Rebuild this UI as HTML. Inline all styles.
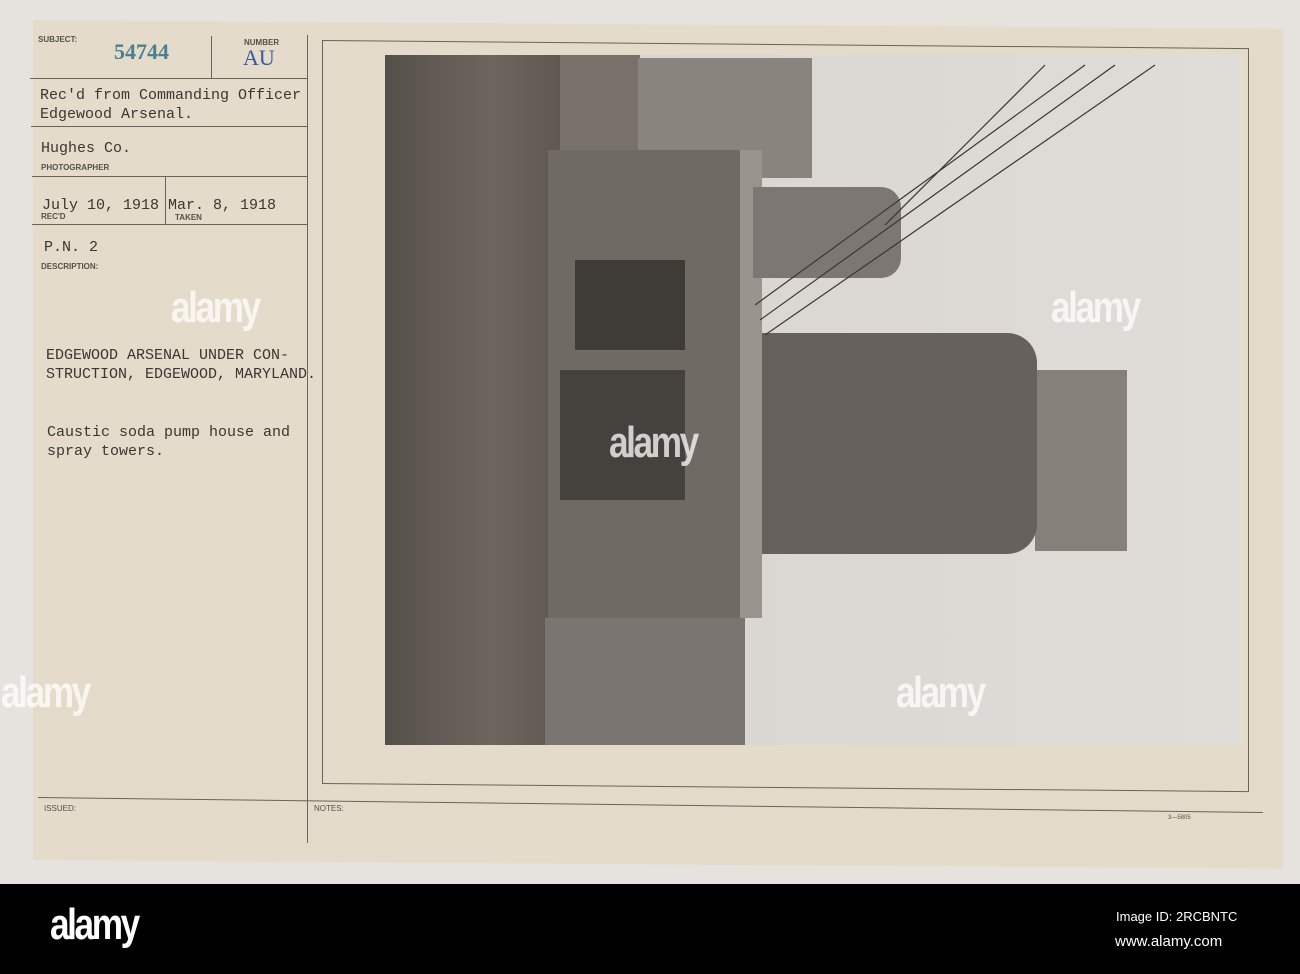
<!DOCTYPE html>
<html><head><meta charset="utf-8"><style>
body{margin:0;width:1300px;height:974px;background:#e6e2de;position:relative;overflow:hidden;font-family:"Liberation Mono",monospace;}
.a{position:absolute}
.card{left:33px;top:20px;width:1250px;height:840px;background:#e5dbca;transform:skewY(0.4deg);transform-origin:0 0}
.t{position:absolute;font-size:15px;color:#3a3632;white-space:pre;line-height:19px}
.s{position:absolute;font-family:"Liberation Sans",sans-serif;font-size:8px;color:#55504a;font-weight:bold}
.hl{position:absolute;height:1px;background:#6a645c}
.vl{position:absolute;width:1px;background:#6a645c}
.wm{position:absolute;font-family:"Liberation Sans",sans-serif;font-weight:bold;color:rgba(255,255,255,.75);font-size:44px;letter-spacing:-3px;transform:scaleX(.8)}
</style></head><body>
<div class="a card"></div>
<div class="vl" style="left:307px;top:35px;height:808px"></div>
<div class="vl" style="left:211px;top:36px;height:42px"></div>
<div class="hl" style="left:30px;top:78px;width:277px"></div>
<div class="hl" style="left:31px;top:126px;width:276px"></div>
<div class="hl" style="left:32px;top:176px;width:275px"></div>
<div class="vl" style="left:165px;top:177px;height:47px"></div>
<div class="hl" style="left:32px;top:224px;width:275px"></div>
<div class="a" style="left:322px;top:40px;width:925px;height:742px;border:1px solid #6a645c;transform:skewY(0.5deg);transform-origin:0 0"></div>
<div class="hl" style="left:38px;top:797px;width:1225px;transform:rotate(0.7deg);transform-origin:0 0"></div>
<div class="s" style="left:38px;top:35px">SUBJECT:</div>
<div class="t" style="left:114px;top:42px;font-size:22px;font-weight:bold;font-family:'Liberation Serif',serif;color:#4a8090">54744</div>
<div class="s" style="left:244px;top:38px">NUMBER</div>
<div class="t" style="left:243px;top:48px;font-size:22px;font-family:'Liberation Serif',serif;color:#3a5aa0">AU</div>
<div class="t" style="left:40px;top:86px">Rec'd from Commanding Officer
Edgewood Arsenal.</div>
<div class="t" style="left:41px;top:139px">Hughes Co.</div>
<div class="s" style="left:41px;top:163px">PHOTOGRAPHER</div>
<div class="t" style="left:42px;top:196px">July 10, 1918 Mar. 8, 1918</div>
<div class="s" style="left:41px;top:212px">REC'D</div>
<div class="s" style="left:175px;top:213px">TAKEN</div>
<div class="t" style="left:44px;top:238px">P.N. 2</div>
<div class="s" style="left:41px;top:262px">DESCRIPTION:</div>
<div class="t" style="left:46px;top:346px">EDGEWOOD ARSENAL UNDER CON-
STRUCTION, EDGEWOOD, MARYLAND.</div>
<div class="t" style="left:47px;top:423px">Caustic soda pump house and
spray towers.</div>
<div class="s" style="left:44px;top:804px;font-weight:normal">ISSUED:</div>
<div class="s" style="left:314px;top:804px;font-weight:normal">NOTES:</div>
<div class="s" style="left:1168px;top:815px;font-weight:normal;font-size:6px">3—5805</div>
<!-- photo -->
<div class="a" style="left:385px;top:55px;width:857px;height:690px;background:linear-gradient(90deg,#d6d2cd,#dcd9d5 60%,#e0dcd7);overflow:hidden">
 <div class="a" style="left:0;top:0;width:175px;height:690px;background:linear-gradient(90deg,#55504a,#6d665e 60%,#5e5850)"></div>
 <div class="a" style="left:175px;top:0;width:80px;height:690px;background:#77716a"></div>
 <div class="a" style="left:253px;top:3px;width:174px;height:120px;background:#8a847e"></div>
 <div class="a" style="left:163px;top:95px;width:214px;height:468px;background:#6f6a64"></div>
 <div class="a" style="left:355px;top:95px;width:22px;height:468px;background:#9a948e"></div>
 <div class="a" style="left:190px;top:205px;width:110px;height:90px;background:#3f3b37"></div>
 <div class="a" style="left:175px;top:315px;width:125px;height:130px;background:#45413c"></div>
 <div class="a" style="left:368px;top:132px;width:148px;height:91px;background:#7c7772;border-radius:0 20px 20px 0"></div>
 <div class="a" style="left:650px;top:315px;width:92px;height:181px;background:#85807a"></div>
 <div class="a" style="left:377px;top:278px;width:275px;height:221px;background:#66615c;border-radius:0 30px 30px 0"></div>
 <div class="a" style="left:160px;top:563px;width:200px;height:127px;background:#7a7570"></div>
 <svg class="a" style="left:0;top:0" width="857" height="690"><g stroke="#3a3632" stroke-width="1.2" fill="none">
  <path d="M370 250 L700 10"/><path d="M375 265 L730 10"/><path d="M380 280 L770 10"/><path d="M500 170 L660 10"/></g></svg>
</div>
<div class="wm" style="left:160px;top:283px">alamy</div>
<div class="wm" style="left:598px;top:418px">alamy</div>
<div class="wm" style="left:1040px;top:283px">alamy</div>
<div class="wm" style="left:885px;top:668px">alamy</div>
<div class="wm" style="left:-10px;top:668px">alamy</div>
<div class="a" style="left:0;top:884px;width:1300px;height:90px;background:#000"></div>
<div class="a" style="left:50px;top:900px;color:#fff;font-family:'Liberation Sans',sans-serif;font-weight:bold;font-size:44px;letter-spacing:-3px;transform:scaleX(.8);transform-origin:0 0">alamy</div>
<div class="a" style="left:1116px;top:909px;color:#fff;font-family:'Liberation Sans',sans-serif;font-size:13px">Image ID: 2RCBNTC</div>
<div class="a" style="left:1115px;top:933px;color:#fff;font-family:'Liberation Sans',sans-serif;font-size:15px">www.alamy.com</div>
</body></html>
